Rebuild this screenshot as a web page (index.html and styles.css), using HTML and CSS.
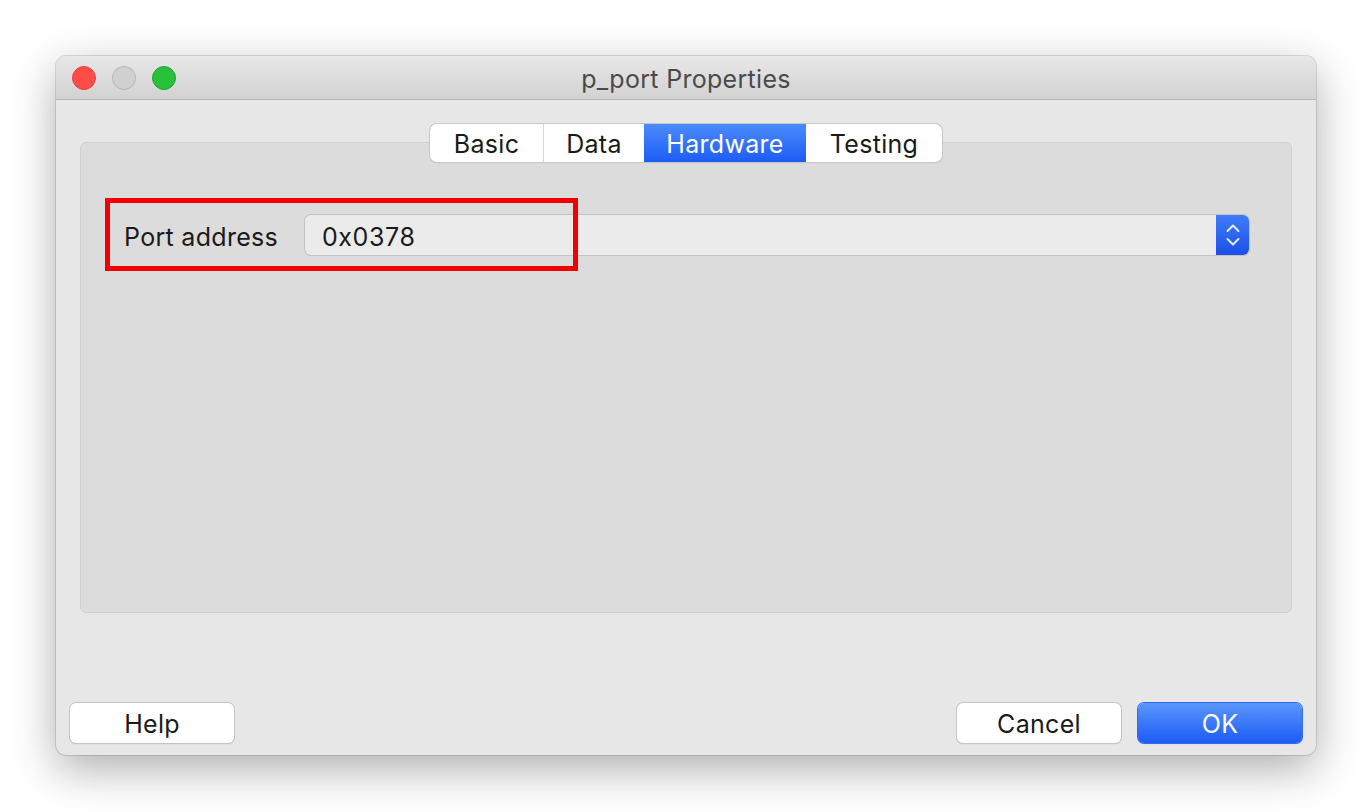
FILE: index.html
```html
<!DOCTYPE html>
<html>
<head>
<meta charset="utf-8">
<link rel="stylesheet" href="styles.css">
</head>
<body>
<div class="desk">
  <div class="window">
    <div class="titlebar">
      <div class="lights">
        <span class="light red"></span>
        <span class="light gray"></span>
        <span class="light green"></span>
      </div>
      <div class="title">p_port Properties</div>
      <div></div>
    </div>
    <div class="content">
      <div class="tabs">
        <div class="tab">Basic</div>
        <div class="tab">Data</div>
        <div class="tab active">Hardware</div>
        <div class="tab">Testing</div>
      </div>
      <div class="panel">
        <div class="row">
          <div class="label">Port address</div>
          <div class="combo">
            <div class="value">0x0378</div>
            <div class="stepper">
              <svg width="16" height="28" viewBox="0 0 16 28">
                <path d="M2.5 10 L8 4.5 L13.5 10" fill="none" stroke="#e8efff" stroke-width="1.9" stroke-linecap="round" stroke-linejoin="round"/>
                <path d="M2.5 18 L8 23.5 L13.5 18" fill="none" stroke="#e8efff" stroke-width="1.9" stroke-linecap="round" stroke-linejoin="round"/>
              </svg>
            </div>
          </div>
        </div>
        <div class="highlight"></div>
      </div>
      <div class="buttons">
        <div class="btn">Help</div>
        <div class="spacer"></div>
        <div class="btn">Cancel</div>
        <div class="btn primary">OK</div>
      </div>
    </div>
  </div>
</div>
</body>
</html>
```
FILE: styles.css
```css
html, body {
  margin: 0;
  padding: 0;
  background: #ffffff;
}
body {
  width: 1372px;
  height: 812px;
  overflow: hidden;
  font-family: Inter, "Helvetica Neue", "Liberation Sans", sans-serif;
  color: #1a1a1a;
}
.desk {
  padding: 56px 0 0 56px;
}
.window {
  width: 1260px;
  height: 699px;
  border-radius: 10px;
  background: #e7e7e7;
  display: flex;
  flex-direction: column;
  box-shadow: 0 0 0 1px rgba(0,0,0,0.12), 0 14px 45px rgba(0,0,0,0.32);
  overflow: hidden;
}
.titlebar {
  height: 43px;
  display: grid;
  grid-template-columns: 1fr auto 1fr;
  align-items: center;
  background: linear-gradient(#e9e7e9, #d3d2d3);
  border-bottom: 1px solid #b3b3b3;
  flex: none;
}
.lights {
  display: flex;
  gap: 16px;
  padding-left: 16px;
}
.light {
  width: 24px;
  height: 24px;
  border-radius: 50%;
  box-sizing: border-box;
}
.light.red { background: #fe4d47; border: 1px solid #e0443e; }
.light.gray { background: #d0d0d0; border: 1px solid #b5b5b5; }
.light.green { background: #29c13b; border: 1px solid #1fa52f; }
.title {
  font-size: 25px;
  color: #4a4a4a;
  font-weight: 400;
  letter-spacing: 0.3px;
  padding-top: 2px;
}
.content {
  flex: 1;
  display: flex;
  flex-direction: column;
  padding: 24px 14px 12px;
}
.tabs {
  align-self: center;
  display: flex;
  height: 38px;
  margin-bottom: -20px;
  position: relative;
  z-index: 1;
  border-radius: 7px;
  background: #ffffff;
  box-shadow: 0 0 0 1px #c6c6c6, 0 1px 1px rgba(0,0,0,0.15);
  overflow: hidden;
}
.tab {
  display: flex;
  align-items: center;
  justify-content: center;
  padding-top: 1px;
  box-sizing: border-box;
  font-size: 25px;
  letter-spacing: 0.3px;
  color: #1a1a1a;
  border-left: 1px solid #d6d6d6;
}
.tab:nth-child(1) { width: 113px; border-left: none; }
.tab:nth-child(2) { width: 101px; }
.tab:nth-child(3) { width: 162px; border-left: none; }
.tab:nth-child(4) { width: 136px; border-left: none; }
.tab.active {
  background: linear-gradient(#4b8bfb, #1d5cf5);
  color: #ffffff;
}
.panel {
  margin: 0 10px;
  height: 471px;
  box-sizing: border-box;
  background: #dcdcdc;
  border: 1px solid #d0d0d0;
  border-radius: 6px;
  position: relative;
  padding: 72px 42px 0 43px;
}
.row {
  display: flex;
  align-items: center;
  height: 40px;
}
.label {
  width: 181px;
  padding-top: 3px;
  font-size: 25px;
  letter-spacing: 0.3px;
  color: #1a1a1a;
}
.combo {
  flex: 1;
  display: flex;
  height: 40px;
  box-sizing: border-box;
  border-radius: 6px;
  background: #ebebeb;
  box-shadow: 0 0 0 1px #c4c4c4, 0 1px 0 #a9a9a9;
  overflow: hidden;
}
.value {
  flex: 1;
  display: flex;
  align-items: center;
  padding: 3px 0 0 17px;
  font-size: 25px;
  letter-spacing: 0.6px;
  color: #1a1a1a;
}
.stepper {
  width: 33px;
  display: flex;
  align-items: center;
  justify-content: center;
  background: linear-gradient(#3e7cf8, #1c4fe9);
}
.highlight {
  position: absolute;
  left: 24px;
  top: 55px;
  width: 473px;
  height: 73px;
  box-sizing: border-box;
  border: 5px solid #f20000;
}
.buttons {
  margin-top: auto;
  display: flex;
  gap: 17px;
  height: 40px;
}
.spacer { flex: 1; }
.btn {
  width: 164px;
  height: 40px;
  box-sizing: border-box;
  display: flex;
  align-items: center;
  justify-content: center;
  padding-top: 2px;
  font-size: 25px;
  letter-spacing: 0.3px;
  color: #1a1a1a;
  background: #ffffff;
  border-radius: 6px;
  box-shadow: 0 0 0 1px #c4c4c4, 0 1px 1px rgba(0,0,0,0.25);
}
.btn.primary {
  color: #ffffff;
  background: linear-gradient(#5a95fb, #1c5cf5);
  box-shadow: 0 0 0 1px #2f6cf3, 0 1px 1px rgba(0,0,0,0.15);
}
```
